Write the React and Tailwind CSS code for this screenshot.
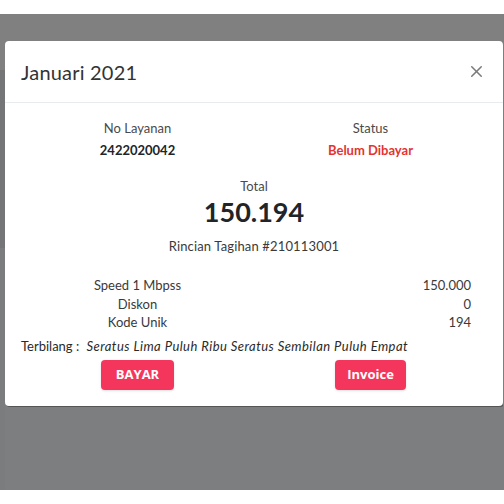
import React from 'react'
import { X } from 'lucide-react'

const rincian = [
  { label: 'Speed 1 Mbpss', value: '150.000' },
  { label: 'Diskon', value: '0' },
  { label: 'Kode Unik', value: '194' }
]

export default function App() {
  return (
    <div className="h-[504px] w-[504px] flex flex-col bg-white text-[#212529] font-['Lato','Open_Sans',sans-serif] overflow-hidden">
      <div className="h-[14px] bg-white" />

      {/* Backdrop */}
      <div className="flex-1 bg-[#7d7e80] flex">
        <div className="w-[5px] flex flex-col">
          <div className="h-[56px] bg-[#808080]" />
          <div className="h-[178px] bg-[#747576]" />
          <div className="flex-1 bg-[#7b7c7e]" />
        </div>

        <div className="flex-1 flex flex-col">
          <div className="h-[27px] bg-[#808080]" />

          {/* Modal */}
          <div className="bg-white rounded-[4px] shadow-[1px_1px_0_#555]">
            <div className="h-[62px] flex items-center justify-between px-4 border-b border-[#e9ecef]">
              <h5 className="text-[20px] text-[#333] tracking-[0.2px]">Januari 2021</h5>
              <X className="w-[19px] h-[19px] text-[#7a7a7a] mr-[1px]" strokeWidth={1.9} />
            </div>

            <div className="px-4 pt-[14px] pb-4 text-[13px]">
              <div className="grid grid-cols-2 text-center">
                <div>
                  <div className="leading-[22px] text-[#4a4a4a]">No Layanan</div>
                  <div className="leading-[22px] font-bold">2422020042</div>
                </div>
                <div>
                  <div className="leading-[22px] text-[#4a4a4a]">Status</div>
                  <div className="leading-[22px] font-bold text-[#e3342f]">Belum Dibayar</div>
                </div>
              </div>

              <div className="mt-[15px] text-center">
                <div className="leading-[20px] text-[#4a4a4a]">Total</div>
                <div className="text-[27px] font-bold leading-[32px]">150.194</div>
                <div className="mt-[8px] leading-[20px] text-[#3a3a3a] tracking-[0.15px]">Rincian Tagihan #210113001</div>
              </div>

              <div className="mt-[20px]">
                {rincian.map((r) => (
                  <div key={r.label} className="grid grid-cols-2 leading-[18.5px] text-[#3a3a3a]">
                    <div className="text-center">{r.label}</div>
                    <div className="text-right pr-4">{r.value}</div>
                  </div>
                ))}
              </div>

              <div className="mt-[5px] leading-[18px] text-[#2a2a2a]">
                Terbilang : <i className="ml-[4px] tracking-[0.45px]">Seratus Lima Puluh Ribu Seratus Sembilan Puluh Empat</i>
              </div>

              <div className="grid grid-cols-2 mt-[5px]">
                <div className="flex justify-center">
                  <button className="h-[30px] w-[73px] rounded-[4px] bg-[#f5365c] text-white font-bold text-[13px] font-['Open_Sans',sans-serif] shadow-sm">BAYAR</button>
                </div>
                <div className="flex justify-center">
                  <button className="h-[30px] w-[71px] rounded-[4px] bg-[#f5365c] text-white font-bold text-[13px] font-['Open_Sans',sans-serif] shadow-sm">Invoice</button>
                </div>
              </div>
            </div>
          </div>

          <div className="flex-1" />
        </div>

        <div className="w-[1px] bg-[#7d7e80]" />
      </div>

      <div className="h-[14px] bg-white" />
    </div>
  )
}
